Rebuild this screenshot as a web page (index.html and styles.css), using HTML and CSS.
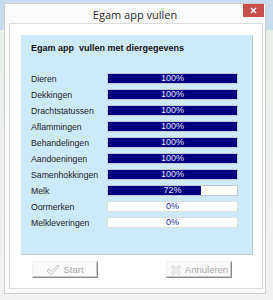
FILE: index.html
```html
<!DOCTYPE html>
<html lang="nl">
<head>
    <meta charset="UTF-8">
    <title>Egam app vullen</title>
    <link rel="stylesheet" href="styles.css">
</head>
<body>
    <div class="window">
        <div class="titlebar">
            <span class="title-spacer"></span>
            <span class="title">Egam app vullen</span>
            <svg class="close-btn" width="21" height="13" viewBox="0 0 21 13">
                <rect x="0" y="0" width="21" height="13" fill="#c94f4f"/>
                <path d="M8 4 L13 9 M13 4 L8 9" stroke="#ffffff" stroke-width="1.4"/>
            </svg>
        </div>

        <div class="client">
            <div class="panel">
                <h1>Egam app&nbsp; vullen met diergegevens</h1>

                <div class="rows">
                    <div class="row"><span class="label">Dieren</span><div class="bar"><div class="fill" style="width: 100%"></div><span class="pct">100%</span></div></div>
                    <div class="row"><span class="label">Dekkingen</span><div class="bar"><div class="fill" style="width: 100%"></div><span class="pct">100%</span></div></div>
                    <div class="row"><span class="label">Drachtstatussen</span><div class="bar"><div class="fill" style="width: 100%"></div><span class="pct">100%</span></div></div>
                    <div class="row"><span class="label">Aflammingen</span><div class="bar"><div class="fill" style="width: 100%"></div><span class="pct">100%</span></div></div>
                    <div class="row"><span class="label">Behandelingen</span><div class="bar"><div class="fill" style="width: 100%"></div><span class="pct">100%</span></div></div>
                    <div class="row"><span class="label">Aandoeningen</span><div class="bar"><div class="fill" style="width: 100%"></div><span class="pct">100%</span></div></div>
                    <div class="row"><span class="label">Samenhokkingen</span><div class="bar"><div class="fill" style="width: 100%"></div><span class="pct">100%</span></div></div>
                    <div class="row"><span class="label">Melk</span><div class="bar"><div class="fill" style="width: 72%"></div><span class="pct">72%</span></div></div>
                    <div class="row"><span class="label">Oormerken</span><div class="bar empty"><span class="pct">0%</span></div></div>
                    <div class="row"><span class="label">Melkleveringen</span><div class="bar empty"><span class="pct">0%</span></div></div>
                </div>
            </div>

            <div class="buttons">
                <button class="btn" disabled>
                    <svg width="14" height="12" viewBox="0 0 14 12">
                        <path d="M1 7 L3 5 L5.5 7.5 L12 1 L13 2.5 L5.5 10.5 Z" fill="#fafafa" stroke="#b8b8b8" stroke-width="0.8" stroke-linejoin="round"/>
                    </svg>
                    <span>Start</span>
                </button>
                <button class="btn" disabled>
                    <svg width="12" height="12" viewBox="0 0 12 12">
                        <path d="M1.5 3 L3 1.5 L6 4.5 L9 1.5 L10.5 3 L7.5 6 L10.5 9 L9 10.5 L6 7.5 L3 10.5 L1.5 9 L4.5 6 Z" fill="#fafafa" stroke="#b8b8b8" stroke-width="0.8" stroke-linejoin="round"/>
                    </svg>
                    <span>Annuleren</span>
                </button>
            </div>
        </div>
    </div>
</body>
</html>
```

FILE: styles.css
```css
:root {
    --panel-blue: #cdeafd;
    --bar-navy: #000080;
    --text-dim: #a8a8a8;
}

body {
    margin: 0;
    width: 273px;
    height: 300px;
    overflow: hidden;
    font-family: 'Liberation Sans', Arial, sans-serif;
    background: linear-gradient(to bottom, #c9dcee 0, #c9dcee 30px, #e9efe9 30px, #f2f2f2 100%);
}

.window {
    margin: 3px 0 0 4px;
    width: 260px;
    height: 289px;
    border: 1px solid #cfcfcf;
    background: #fbfbfb;
    display: flex;
    flex-direction: column;
}

.titlebar {
    height: 19px;
    display: flex;
    align-items: flex-start;
}

.title-spacer {
    width: 22px;
}

.title {
    flex: 1;
    text-align: center;
    font-family: 'Open Sans', 'Noto Sans', sans-serif;
    font-size: 11px;
    line-height: 21px;
    color: #2b2b2b;
}

.close-btn {
    display: block;
    flex: none;
    margin-right: 1px;
}

.client {
    flex: 1;
    margin: 0 2px 4px 4px;
    border: 1px solid #dcdcdc;
    background: #fff;
    display: flex;
    flex-direction: column;
}

.panel {
    margin: 11px 9px 0 11px;
    height: 220px;
    background: var(--panel-blue);
    border-bottom: 1px solid #b9c9d6;
    border-right: 1px solid #b9c9d6;
    padding: 8px 0 0 10px;
    box-sizing: border-box;
}

h1 {
    margin: 0;
    font-size: 9px;
    font-weight: bold;
    line-height: 11px;
    color: #111;
}

.rows {
    margin-top: 19px;
    display: flex;
    flex-direction: column;
    gap: 5px;
}

.row {
    display: flex;
    align-items: center;
    height: 11px;
}

.label {
    width: 76px;
    font-size: 8.7px;
    color: #1a1a1a;
    white-space: nowrap;
}

.bar {
    position: relative;
    width: 129px;
    height: 9px;
    border: 1px solid #c6c6d8;
    background: #fff;
}

.fill {
    height: 100%;
    background: var(--bar-navy);
}

.pct {
    position: absolute;
    inset: 0;
    text-align: center;
    font-size: 9px;
    line-height: 9px;
    color: #e6e6ff;
}

.bar.empty {
    border-color: #dedede;
}

.bar.empty .pct {
    color: #1c2a9c;
}

.buttons {
    display: flex;
    justify-content: space-between;
    padding: 6px 30px 0 22px;
}

.btn {
    width: 66px;
    height: 17px;
    padding: 0;
    display: flex;
    align-items: center;
    justify-content: center;
    gap: 3px;
    background: #fafafa;
    border: 1px solid;
    border-color: #f0f0f0 #8a8a8a #8a8a8a #f0f0f0;
    box-shadow: inset -1px -1px 0 #c8c8c8;
    font-family: 'Liberation Sans', Arial, sans-serif;
    font-size: 9.5px;
    color: var(--text-dim);
}

.btn svg {
    display: block;
}
```
